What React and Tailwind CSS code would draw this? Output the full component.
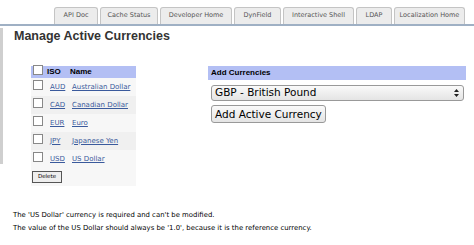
import React from 'react';

const tabs = [
  { label: 'API Doc', w: 'w-[44px]' },
  { label: 'Cache Status', w: 'w-[58px]' },
  { label: 'Developer Home', w: 'w-[72px]' },
  { label: 'DynField', w: 'w-[47px]' },
  { label: 'Interactive Shell', w: 'w-[71px]' },
  { label: 'LDAP', w: 'w-[36px]' },
  { label: 'Localization Home', w: 'w-[71px]' },
];

const currencies = [
  { iso: 'AUD', name: 'Australian Dollar' },
  { iso: 'CAD', name: 'Canadian Dollar' },
  { iso: 'EUR', name: 'Euro' },
  { iso: 'JPY', name: 'Japanese Yen' },
  { iso: 'USD', name: 'US Dollar' },
];

const Box = () => (
  <span className="inline-block w-[10px] h-[10px] border border-[#888] bg-white" />
);

export default function App() {
  return (
    <div className="w-[474px] h-[245px] bg-white overflow-hidden font-['DejaVu_Sans',sans-serif] text-[#222]">
      {/* tab strip */}
      <div className="flex items-end gap-[2px] pl-[54px] pt-[8px] border-b-2 border-[#9fb0c4] h-[26px]">
        {tabs.map(t => (
          <div
            key={t.label}
            className={`${t.w} h-[17px] flex items-center justify-center bg-[#ececec] border border-b-0 border-[#c4c4c4] rounded-t-[3px] text-[6.5px] text-[#555] whitespace-nowrap`}
          >
            {t.label}
          </div>
        ))}
      </div>

      <div className="flex">
        <div className="w-[3px] bg-[#cfcfcf] h-[136px] mt-[2px]" />
        <div className="flex-1">
          <h1 className="ml-[11px] mt-[1px] text-[12.5px] font-bold text-[#333] font-['Liberation_Sans',sans-serif]">
            Manage Active Currencies
          </h1>

          <div className="flex mt-[20px]">
            {/* currency table */}
            <div className="ml-[28px] w-[105px] text-[7px]">
              <div className="flex items-center h-[12px] bg-[#b3bff4] font-bold text-black font-['Liberation_Sans',sans-serif]">
                <span className="ml-[2px] mr-[4px]"><Box /></span>
                <span className="w-[23px] text-[8px]">ISO</span>
                <span className="text-[8px]">Name</span>
              </div>
              {currencies.map((c, i) => (
                <div key={c.iso} className={`flex items-center h-[18px] ${i % 2 === 0 ? 'bg-[#f7f7f7]' : 'bg-[#f0f0f0]'}`}>
                  <span className="ml-[2px] mr-[7px]"><Box /></span>
                  <a className="w-[22px] text-[#3a5a9c] underline">{c.iso}</a>
                  <a className="text-[#3a5a9c] underline whitespace-nowrap">{c.name}</a>
                </div>
              ))}
              <div className="bg-[#f7f7f7] h-[18px] flex items-center">
                <button className="ml-[1px] h-[12px] w-[30px] text-[5.5px] leading-none bg-[#eee] border border-[#555] text-black">
                  Delete
                </button>
              </div>
            </div>

            {/* add currencies */}
            <div className="ml-[72px] w-[258px]">
              <div className="h-[14px] bg-[#b3bff4] flex items-center pl-[3px] text-[8px] font-bold text-black font-['Liberation_Sans',sans-serif]">
                Add Currencies
              </div>
              <div className="mt-[5px] ml-[3px] mr-[2px] h-[16px] flex items-center justify-between px-[3px] border border-[#999] rounded-[3px] bg-gradient-to-b from-[#fafafa] to-[#e4e4e4] text-[10.5px] text-black">
                <span>GBP - British Pound</span>
                <svg width="7" height="10" viewBox="0 0 7 10">
                  <path d="M3.5 1 L6 4 L1 4 Z M3.5 9 L6 6 L1 6 Z" fill="#222" />
                </svg>
              </div>
              <button className="mt-[1px] ml-[3px] h-[18px] px-[3px] border border-[#999] rounded-[3px] bg-gradient-to-b from-[#fafafa] to-[#e4e4e4] text-[10.5px] text-black leading-none">
                Add Active Currency
              </button>
            </div>
          </div>
        </div>
      </div>

      <div className="mt-[23px] ml-[13px] text-[6.9px] text-black leading-[13px] font-['DejaVu_Sans',sans-serif]">
        <p>The 'US Dollar' currency is required and can't be modified.</p>
        <p>The value of the US Dollar should always be '1.0', because it is the reference currency.</p>
      </div>
    </div>
  );
}
